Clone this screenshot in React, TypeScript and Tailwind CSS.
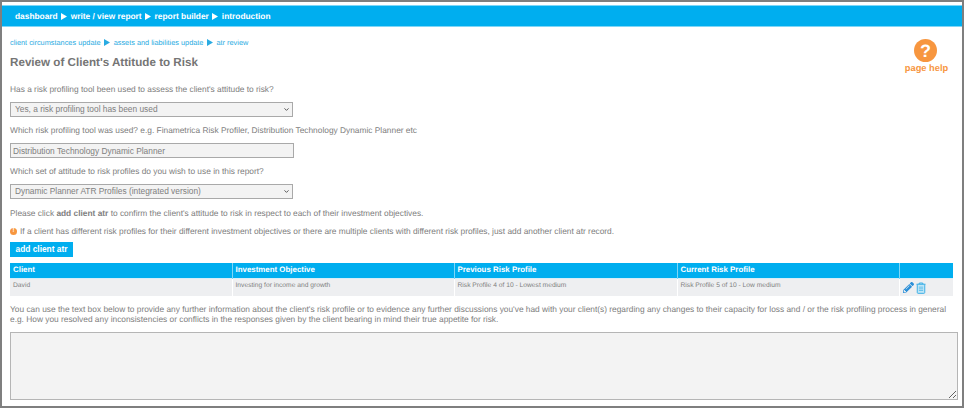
import React from 'react';
import { ChevronDown } from 'lucide-react';
import { FaPencilAlt } from 'react-icons/fa';

function Arrow() {
  return (
    <svg viewBox="0 0 6 7" className="w-[6px] h-[7px] mx-[3.5px] shrink-0" fill="currentColor">
      <path d="M0 0l6 3.5L0 7z" />
    </svg>
  );
}

function Trash() {
  return (
    <svg viewBox="0 0 12 14" className="w-[10px] h-[12px] text-[#3fb0e6]" fill="none" stroke="currentColor" strokeWidth="1.2">
      <path d="M0.5 2.5h11" />
      <path d="M4 2.5V1h4v1.5" />
      <rect x="1.5" y="2.5" width="9" height="10.9" rx="1" fill="#bfe6f7" />
      <path d="M3.5 6h5M3.5 8h5M3.5 10h5" strokeWidth="0.8" />
    </svg>
  );
}

function Select({ label }: { label: string }) {
  return (
    <div className="relative mt-[7px] w-[283px]">
      <select defaultValue="a" className="block appearance-none w-full h-[15px] pl-[4px] bg-[#f3f3f3] border border-[#a9a9a9] text-[8.35px] text-[#808080]">
        <option value="a">{label}</option>
      </select>
      <ChevronDown className="absolute right-[3px] top-[4px] w-[7px] h-[7px] text-[#444]" strokeWidth={3} />
    </div>
  );
}

export default function App() {
  return (
    <div className="w-[964px] h-[408px] overflow-hidden border-2 border-[#7f7f7f] bg-white text-[#808080] [text-rendering:geometricPrecision] font-['Liberation_Sans',Arial,sans-serif]">
      {/* Top nav */}
      <nav className="mt-[3px] h-[22px] bg-[#00aeef] border-y border-[#7fd6f7] flex items-center pl-[13px] text-white font-bold text-[8.35px]">
        dashboard<Arrow />write / view report<Arrow />report builder<Arrow />introduction
      </nav>

      <main className="relative px-[8px]">
        {/* Page help */}
        <div className="absolute right-[13px] top-[12px] w-[46px] flex flex-col items-center text-[#f7963f]">
          <div className="-ml-[1px] w-[23px] h-[23px] rounded-full bg-[#f7963f] flex items-center justify-center text-white font-bold text-[18px] leading-none">?</div>
          <span className="ml-[1px] font-bold text-[9.3px] leading-[12px] whitespace-nowrap">page help</span>
        </div>

        <div className="pt-[10px] h-[21px] flex items-center text-[7.35px] text-[#29abe2] whitespace-nowrap">
          client circumstances update<Arrow />assets and liabilities update<Arrow />atr review
        </div>

        <h1 className="mt-[7px] text-[11.65px] leading-[16px] font-bold text-[#757575]">Review of Client's Attitude to Risk</h1>

        <p className="mt-[12px] text-[8.35px] leading-[12px]">Has a risk profiling tool been used to assess the client's attitude to risk?</p>
        <Select label="Yes, a risk profiling tool has been used" />

        <p className="mt-[7px] text-[8.35px] leading-[12px]">Which risk profiling tool was used? e.g. Finametrica Risk Profiler, Distribution Technology Dynamic Planner etc</p>
        <input readOnly value="Distribution Technology Dynamic Planner" className="mt-[7px] block w-[284px] h-[15px] px-[2px] bg-[#f3f3f3] border border-[#a9a9a9] text-[8.35px] text-[#808080]" />

        <p className="mt-[7px] text-[8.35px] leading-[12px]">Which set of attitude to risk profiles do you wish to use in this report?</p>
        <Select label="Dynamic Planner ATR Profiles (integrated version)" />

        <p className="mt-[8px] text-[8.35px] leading-[12px]">Please click <b>add client atr</b> to confirm the client's attitude to risk in respect to each of their investment objectives.</p>

        <p className="mt-[6px] flex items-center text-[8.35px] leading-[12px] whitespace-nowrap">
          <span className="mr-[3px] w-[7px] h-[7px] rounded-full bg-[#f7963f] text-white font-bold text-[6px] leading-[7px] text-center">!</span>
          If a client has different risk profiles for their different investment objectives or there are multiple clients with different risk profiles, just add another client atr record.
        </p>

        <button className="mt-[5px] block h-[15px] w-[63px] bg-[#00aeef] text-white font-bold text-[8.35px] leading-none">add client atr</button>

        <table className="mt-[6px] w-[943px] table-fixed border-collapse text-[6.7px]">
          <thead>
            <tr className="h-[15px] bg-[#00aeef] text-white font-bold text-[7.9px] text-left">
              <th className="w-[222px] pl-[3px] border-r border-[#7fd6f7]">Client</th>
              <th className="w-[222px] pl-[3px] border-r border-[#7fd6f7]">Investment Objective</th>
              <th className="w-[223px] pl-[3px] border-r border-[#7fd6f7]">Previous Risk Profile</th>
              <th className="w-[222px] pl-[3px] border-r border-[#7fd6f7]">Current Risk Profile</th>
              <th />
            </tr>
          </thead>
          <tbody>
            <tr className="h-[18px] bg-[#eeeff1] border-t border-[#d5eef9] text-[#808080] align-top">
              <td className="pl-[3px] pt-[2px] border-r border-white">David</td>
              <td className="pl-[3px] pt-[2px] border-r border-white">Investing for income and growth</td>
              <td className="pl-[3px] pt-[2px] border-r border-white">Risk Profile 4 of 10 - Lowest medium</td>
              <td className="pl-[3px] pt-[2px] border-r border-white">Risk Profile 5 of 10 - Low medium</td>
              <td className="pl-[3px] pt-[3px]">
                <div className="flex items-center gap-[2px]">
                  <FaPencilAlt className="w-[11px] h-[11px] text-[#2a8fd8]" />
                  <Trash />
                </div>
              </td>
            </tr>
          </tbody>
        </table>

        <p className="mt-[9px] w-[938px] text-[8.35px] leading-[9.5px]">
          You can use the text box below to provide any further information about the client's risk profile or to evidence any further discussions you've had with your client(s) regarding any changes to their capacity for loss and / or the risk profiling process in general e.g. How you resolved any inconsistencies or conflicts in the responses given by the client bearing in mind their true appetite for risk.
        </p>

        <textarea readOnly className="mt-[8px] block w-[948px] h-[68px] bg-[#f3f3f3] border border-[#b5b5b5]" />
      </main>
    </div>
  );
}
